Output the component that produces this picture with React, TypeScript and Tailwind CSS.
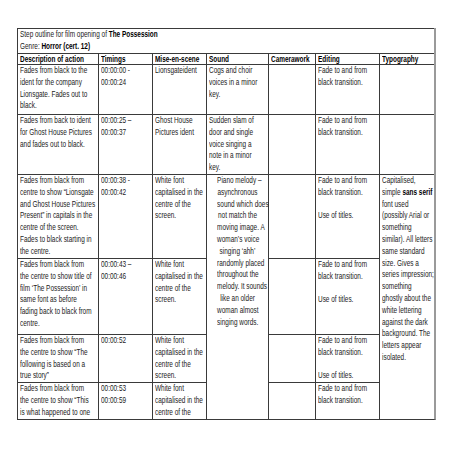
import React from "react";

const line = "whitespace-nowrap h-[11.8px] leading-[11.8px] origin-left scale-x-[0.715]";
const lineC = "whitespace-nowrap h-[11.8px] leading-[11.8px] origin-center scale-x-[0.715]";

const L = ({ lines, center }: { lines: string[]; center?: boolean }) => (
  <>
    {lines.map((l, i) => (
      <div key={i} className={center ? lineC : line}>
        {l === "" ? "\u00a0" : l}
      </div>
    ))}
  </>
);

const td = "border border-[#3a3a3a] align-top px-[2px] py-0";

const rows: {
  h: string;
  d: string[];
  t: string[];
  m: string[];
  s?: string[];
  e: string[];
}[] = [
  {
    h: "h-[50px]",
    d: ["Fades from black to the", "ident for the company", "Lionsgate. Fades out to", "black."],
    t: ["00:00:00 -", "00:00:24"],
    m: ["Lionsgateident"],
    s: ["Cogs and choir", "voices in a minor", "key."],
    e: ["Fade to and from", "black transition."],
  },
  {
    h: "h-[60px]",
    d: ["Fades from back to ident", "for Ghost House Pictures", "and fades out to black."],
    t: ["00:00:25 \u2013", "00:00:37"],
    m: ["Ghost House", "Pictures ident"],
    s: ["Sudden slam of", "door and single", "voice singing a", "note in a minor", "key."],
    e: ["Fade to and from", "black transition."],
  },
];

const rest: { h: string; d: string[]; t: string[]; m: string[]; e: string[] }[] = [
  {
    h: "h-[84px]",
    d: [
      "Fades from black from",
      "centre to show \u201cLionsgate",
      "and Ghost House Pictures",
      "Present\u201d in capitals in the",
      "centre of the screen.",
      "Fades to black starting in",
      "the centre.",
    ],
    t: ["00:00:38 -", "00:00:42"],
    m: ["White font", "capitalised in the", "centre of the", "screen."],
    e: ["Fade to and from", "black transition.", "", "Use of titles."],
  },
  {
    h: "h-[76px]",
    d: [
      "Fades from black from",
      "the centre to show title of",
      "film \u2018The Possession\u2019 in",
      "same font as before",
      "fading back to black from",
      "centre.",
    ],
    t: ["00:00:43 \u2013", "00:00:46"],
    m: ["White font", "capitalised in the", "centre of the", "screen."],
    e: ["Fade to and from", "black transition.", "", "Use of titles."],
  },
  {
    h: "h-[47px]",
    d: ["Fades from black from", "the centre to show \u201cThe", "following is based on a", "true story\u201d"],
    t: ["00:00:52"],
    m: ["White font", "capitalised in the", "centre of the", "screen."],
    e: ["Fade to and from", "black transition.", "", "Use of titles."],
  },
  {
    h: "h-[40px]",
    d: ["Fades from black from", "the centre to show \u201cThis", "is what happened to one"],
    t: ["00:00:53", "00:00:59"],
    m: ["White font", "capitalised in the", "centre of the"],
    e: ["Fade to and from", "black transition."],
  },
];

const sound = [
  "Piano melody \u2013",
  "asynchronous",
  "sound which does",
  "not match the",
  "moving image. A",
  "woman\u2019s voice",
  "singing \u2018ahh\u2019",
  "randomly placed",
  "throughout the",
  "melody. It sounds",
  "like an older",
  "woman almost",
  "singing words.",
];

const headers = ["Description of action", "Timings", "Mise-en-scene", "Sound", "Camerawork", "Editing", "Typography"];

export default function App() {
  return (
    <div
      className="w-[453px] h-[453px] bg-white pt-[28px] pl-[17px] text-[#222] text-[9px]"
      style={{ fontFamily: '"Liberation Sans", Arial, sans-serif' }}
    >
      <div className="w-[419px] h-[392px] overflow-hidden border-b border-b-[#3a3a3a] border-r-2 border-r-[#9a9a9a]">
        <table className="table-fixed border-collapse w-[418px]">
          <colgroup>
            <col className="w-[81px]" />
            <col className="w-[54px]" />
            <col className="w-[54px]" />
            <col className="w-[62px]" />
            <col className="w-[47px]" />
            <col className="w-[64px]" />
            <col className="w-[56px]" />
          </colgroup>
          <tbody>
            <tr className="h-[25px]">
              <td colSpan={7} className={td}>
                <div className={line}>
                  Step outline for film opening of <b className="text-black">The Possession</b>
                </div>
                <div className={line}>
                  Genre: <b className="text-black">Horror (cert. 12)</b>
                </div>
              </td>
            </tr>
            <tr className="font-bold text-black h-[10px]">
              {headers.map((h) => (
                <td key={h} className={td}>
                  <div className="whitespace-nowrap h-[10px] leading-[10px] origin-left scale-x-[0.715]">{h}</div>
                </td>
              ))}
            </tr>
            {rows.map((r, i) => (
              <tr key={i} className={r.h}>
                <td className={td}><L lines={r.d} /></td>
                <td className={td}><L lines={r.t} /></td>
                <td className={td}><L lines={r.m} /></td>
                <td className={td}><L lines={r.s || []} /></td>
                <td className={td}></td>
                <td className={td}><L lines={r.e} /></td>
                <td className={td}></td>
              </tr>
            ))}
            {rest.map((r, i) => (
              <tr key={"r" + i} className={r.h}>
                <td className={td}><L lines={r.d} /></td>
                <td className={td}><L lines={r.t} /></td>
                <td className={td}><L lines={r.m} /></td>
                {i === 0 && (
                  <td rowSpan={4} className={td + " text-center"}>
                    <L lines={sound} center />
                  </td>
                )}
                <td className={td}></td>
                <td className={td}><L lines={r.e} /></td>
                {i === 0 && (
                  <td rowSpan={4} className={td}>
                    <div className={line}>Capitalised,</div>
                    <div className={line}>
                      simple <b className="text-black">sans serif</b>
                    </div>
                    <L
                      lines={[
                        "font used",
                        "(possibly Arial or",
                        "something",
                        "similar). All letters",
                        "same standard",
                        "size. Gives a",
                        "series impression;",
                        "something",
                        "ghostly about the",
                        "white lettering",
                        "against the dark",
                        "background. The",
                        "letters appear",
                        "isolated.",
                      ]}
                    />
                  </td>
                )}
              </tr>
            ))}
          </tbody>
        </table>
      </div>
    </div>
  );
}
